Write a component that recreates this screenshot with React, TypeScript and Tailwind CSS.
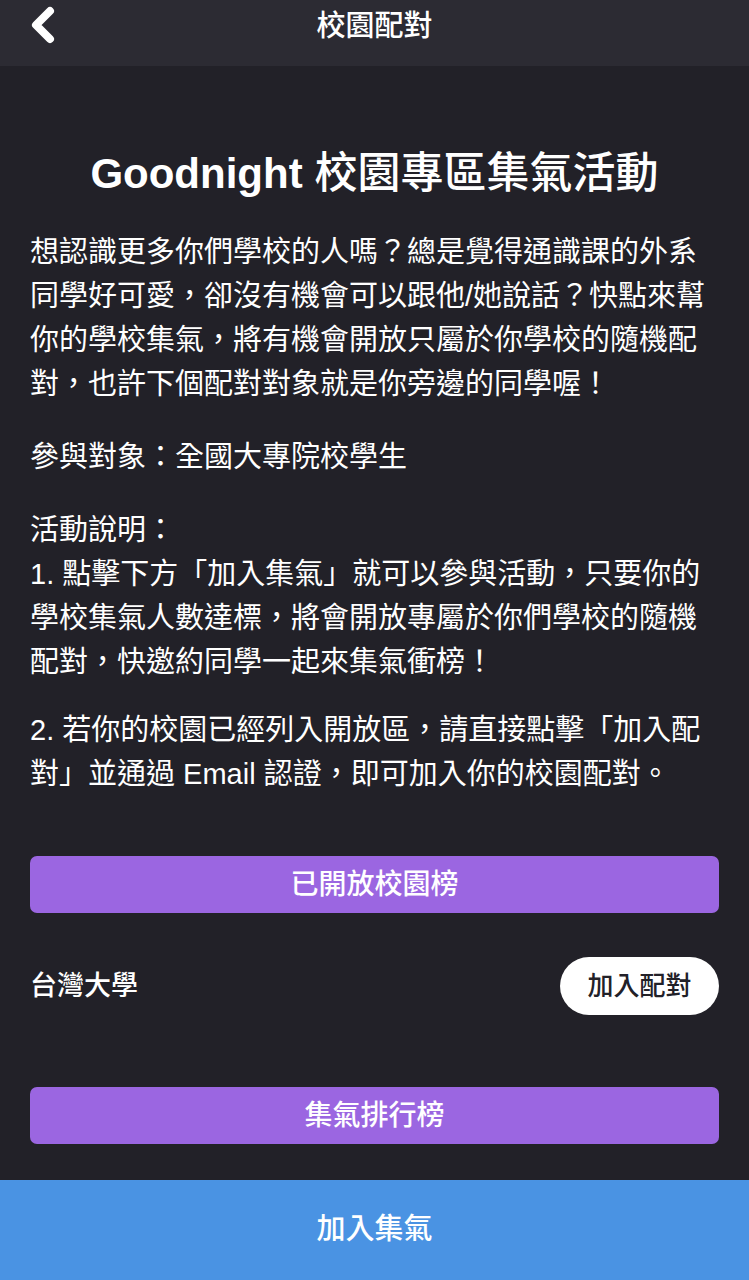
import React from "react";

const font = { fontFamily: '"Liberation Sans", "Noto Sans CJK TC", sans-serif' };

export default function App() {
  return (
    <div
      className="w-[749px] h-[1280px] bg-[#222128] text-white flex flex-col overflow-hidden"
      style={font}
    >
      <header className="h-[66px] shrink-0 bg-[#2c2b33] relative flex justify-center pt-[8px]">
        <svg
          className="absolute left-[24px] top-[2px]"
          width="40"
          height="46"
          viewBox="0 0 40 46"
        >
          <polyline
            points="26,9 12,23 26,37"
            fill="none"
            stroke="white"
            strokeWidth="8"
            strokeLinecap="round"
            strokeLinejoin="round"
          />
        </svg>
        <h1 className="text-[29px] leading-[36px] font-medium">校園配對</h1>
      </header>

      <main className="flex-1 flex flex-col px-[30px]">
        <h2 className="mt-[82px] text-center text-[43px] leading-[50px] font-medium">
          <span className="font-semibold text-[42px]">Goodnight</span> 校園專區集氣活動
        </h2>

        <div className="mt-[31px] text-[29px] leading-[44px] font-normal flex flex-col">
          <p>
            想認識更多你們學校的人嗎？總是覺得通識課的外系
            <br />
            同學好可愛，卻沒有機會可以跟他/她說話？快點來幫
            <br />
            你的學校集氣，將有機會開放只屬於你學校的隨機配
            <br />
            對，也許下個配對對象就是你旁邊的同學喔！
          </p>
          <p className="mt-[29px]">參與對象：全國大專院校學生</p>
          <p className="mt-[29px]">
            活動說明：
            <br />
            1. 點擊下方「加入集氣」就可以參與活動，只要你的
            <br />
            學校集氣人數達標，將會開放專屬於你們學校的隨機
            <br />
            配對，快邀約同學一起來集氣衝榜！
          </p>
          <p className="mt-[24px]">
            2. 若你的校園已經列入開放區，請直接點擊「加入配
            <br />
            對」並通過 Email 認證，即可加入你的校園配對。
          </p>
        </div>

        <button className="mt-[60px] h-[57px] w-full rounded-[7px] bg-[#9b66e1] text-[28px] font-medium text-white">
          已開放校園榜
        </button>

        <div className="mt-[44px] flex items-center justify-between">
          <span className="text-[27px] font-medium">台灣大學</span>
          <button className="h-[58px] w-[159px] rounded-full bg-white text-[#222128] text-[26px] font-medium">
            加入配對
          </button>
        </div>

        <button className="mt-[72px] h-[57px] w-full rounded-[7px] bg-[#9b66e1] text-[28px] font-medium text-white">
          集氣排行榜
        </button>
      </main>

      <footer className="h-[100px] shrink-0 bg-[#4a93e3] flex items-center justify-center">
        <span className="text-[29px] font-medium">加入集氣</span>
      </footer>
    </div>
  );
}
